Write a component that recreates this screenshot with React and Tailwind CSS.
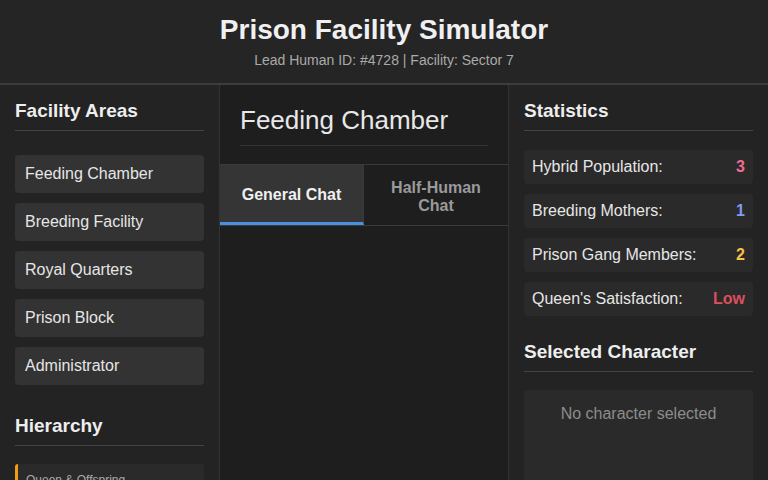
const areas = ["Feeding Chamber", "Breeding Facility", "Royal Quarters", "Prison Block", "Administrator"];

const stats = [
  { label: "Hybrid Population:", value: "3", color: "text-[#f06a92]" },
  { label: "Breeding Mothers:", value: "1", color: "text-[#7f9cf5]" },
  { label: "Prison Gang Members:", value: "2", color: "text-[#f6c344]" },
  { label: "Queen's Satisfaction:", value: "Low", color: "text-[#dc4f5c]" },
];

const Heading = ({ children, className = "" }) => (
  <h2 className={`text-[19px] leading-[24px] font-bold text-[#eeeeee] border-b border-[#444] ${className}`}>
    {children}
  </h2>
);

const App = () => {
  return (
    <div className="w-[768px] h-[480px] overflow-hidden bg-[#1e1e1e] text-[#e0e0e0] font-['Liberation_Sans',Arial,sans-serif] flex flex-col">
      <header className="bg-[#252525] border-b-2 border-[#3c3c3c] pt-[14px] pb-[15px] text-center shrink-0">
        <h1 className="text-[28px] leading-[32px] font-bold text-[#f0f0f0]">Prison Facility Simulator</h1>
        <p className="mt-[6px] text-[14px] leading-[16px] text-[#aaaaaa]">Lead Human ID: #4728 | Facility: Sector 7</p>
      </header>

      <div className="flex-1 grid grid-cols-[220px_1fr_260px] min-h-0">
        <aside className="bg-[#232323] border-r border-[#333] px-[15px] pt-[14px]">
          <Heading className="pb-[7px]">Facility Areas</Heading>
          <div className="mt-[24px] flex flex-col gap-[10px]">
            {areas.map((a) => (
              <button key={a} className="h-[38px] bg-[#333333] rounded text-left pl-[10px] text-[16px] text-[#e6e6e6]">
                {a}
              </button>
            ))}
          </div>
          <Heading className="mt-[29px] pb-[7px]">Hierarchy</Heading>
          <div className="mt-[18px] bg-[#2a2a2a] border-l-[3px] border-[#f39c12] rounded-[3px] pl-[8px] pt-[7px] h-[40px] text-[12px] text-[#aaaaaa]">
            Queen &amp; Offspring
          </div>
        </aside>

        <main className="bg-[#1e1e1e] flex flex-col">
          <div className="mx-[20px] pt-[20px] pb-[10px] border-b border-[#333]">
            <h2 className="text-[26px] leading-[30px] text-[#e8e8e8]">Feeding Chamber</h2>
          </div>
          <div className="mt-[18px] grid grid-cols-2 border-t border-b border-[#3a3a3a]">
            <button className="h-[60px] bg-[#353535] border-r border-[#3a3a3a] border-b-[3px] border-b-[#4a90e2] text-[16px] font-bold text-[#f0f0f0] pt-[3px]">
              General Chat
            </button>
            <button className="h-[60px] text-[16px] leading-[18px] font-bold text-[#9a9a9a] px-4 pt-[3px]">
              Half-Human Chat
            </button>
          </div>
        </main>

        <aside className="bg-[#232323] border-l border-[#333] px-[15px] pt-[14px]">
          <Heading className="pb-[7px]">Statistics</Heading>
          <div className="mt-[19px] flex flex-col gap-[10px]">
            {stats.map((s) => (
              <div key={s.label} className="h-[34px] bg-[#2a2a2a] rounded flex items-center justify-between px-[8px] text-[16px]">
                <span className="text-[#e6e6e6]">{s.label}</span>
                <span className={`font-bold ${s.color}`}>{s.value}</span>
              </div>
            ))}
          </div>
          <Heading className="mt-[24px] pb-[7px]">Selected Character</Heading>
          <div className="mt-[18px] bg-[#2a2a2a] rounded h-[120px] pt-[12px] text-center text-[16px] text-[#8c8c8c]">
            No character selected
          </div>
        </aside>
      </div>
    </div>
  );
};

export default App;
